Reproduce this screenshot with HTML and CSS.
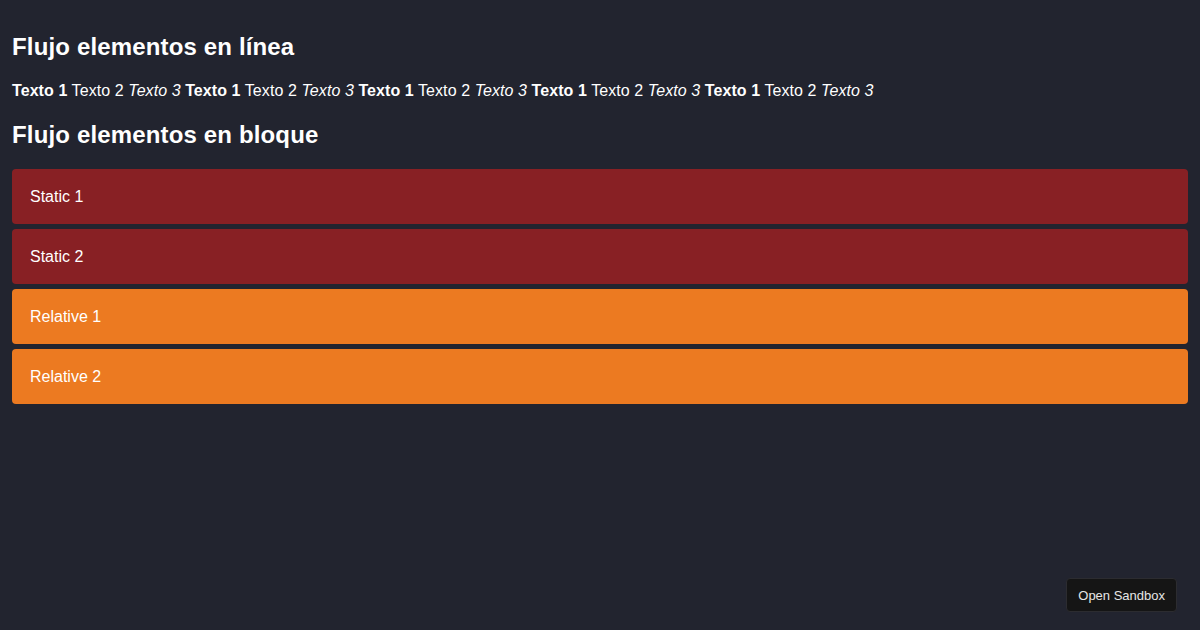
FILE: index.html
```html
<!DOCTYPE html>
<html>
<head>
  <title>Flujo de elementos</title>
  <link rel="stylesheet" href="styles.css">
</head>
<body>
  <h2>Flujo elementos en línea</h2>
  <div class="inline-flow">
    <b>Texto 1</b> <span>Texto 2</span> <i>Texto 3</i>
    <b>Texto 1</b> <span>Texto 2</span> <i>Texto 3</i>
    <b>Texto 1</b> <span>Texto 2</span> <i>Texto 3</i>
    <b>Texto 1</b> <span>Texto 2</span> <i>Texto 3</i>
    <b>Texto 1</b> <span>Texto 2</span> <i>Texto 3</i>
  </div>

  <h2>Flujo elementos en bloque</h2>
  <div class="box static">Static 1</div>
  <div class="box static">Static 2</div>
  <div class="box relative">Relative 1</div>
  <div class="box relative">Relative 2</div>

  <button class="sandbox-btn">Open Sandbox</button>
</body>
</html>
```

FILE: styles.css
```css
body {
  font-family: "Liberation Sans", Arial, sans-serif;
  background-color: #22242f;
  color: #ffffff;
  margin: 0;
  padding: 13px 12px;
  height: 100vh;
  box-sizing: border-box;
}
h2 {
  font-size: 24px;
  margin: 20px 0;
  letter-spacing: 0.15px;
}
.inline-flow {
  font-size: 16px;
  line-height: 20px;
  letter-spacing: 0.075px;
}
.box {
  height: 55px;
  line-height: 55px;
  padding: 0 18px;
  margin-bottom: 5px;
  border-radius: 4px;
  font-size: 16px;
}
.box.static {
  background-color: #882024;
}
.box.relative {
  background-color: #ec7a21;
}
.sandbox-btn {
  position: fixed;
  right: 23px;
  bottom: 18px;
  height: 34px;
  font-family: "Liberation Sans", Arial, sans-serif;
  font-size: 13px;
  color: #e6e6e6;
  background-color: #151515;
  border: 1px solid #2c2c30;
  border-radius: 4px;
  padding: 0 11px;
  cursor: pointer;
}
```
